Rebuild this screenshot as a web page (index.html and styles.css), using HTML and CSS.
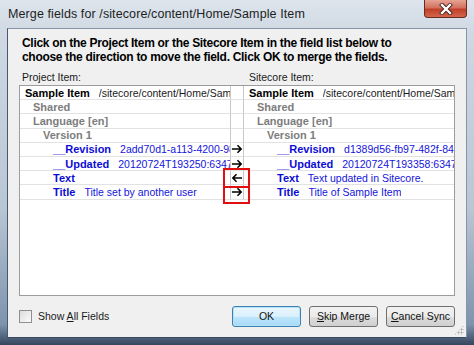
FILE: index.html
```html
<!DOCTYPE html>
<html lang="en">
<head>
  <meta charset="UTF-8">
  <title>Merge fields</title>
  <link rel="stylesheet" href="styles.css">
</head>
<body>
<div class="window">
  <div class="titlebar">
    <span class="title">Merge fields for /sitecore/content/Home/Sample Item</span>
    <div class="close">
      <svg width="16" height="12" viewBox="0 0 16 12">
        <path d="M4 2 L12 10 M12 2 L4 10" stroke="#3a1a16" stroke-width="4" stroke-linecap="square"/>
        <path d="M4 2 L12 10 M12 2 L4 10" stroke="#fff" stroke-width="2.4" stroke-linecap="square"/>
      </svg>
    </div>
  </div>

  <div class="client">
    <p class="intro">Click on the Project Item or the Sitecore Item in the field list below to<br>choose the direction to move the field. Click OK to merge the fields.</p>

    <div class="labels">
      <span class="lbl">Project Item:</span>
      <span class="lbl">Sitecore Item:</span>
    </div>

    <div class="panel">
      <div class="grid">
        <!-- row: item -->
        <div class="cell"><b class="item">Sample Item</b><span class="path">/sitecore/content/Home/Sample Item</span></div>
        <div class="cell mid"></div>
        <div class="cell"><b class="item">Sample Item</b><span class="path">/sitecore/content/Home/Sample Item</span></div>

        <div class="cell"><b class="grey lv1">Shared</b></div>
        <div class="cell mid"></div>
        <div class="cell"><b class="grey lv1">Shared</b></div>

        <div class="cell"><b class="grey lv1">Language [en]</b></div>
        <div class="cell mid"></div>
        <div class="cell"><b class="grey lv1">Language [en]</b></div>

        <div class="cell"><b class="grey lv2">Version 1</b></div>
        <div class="cell mid"></div>
        <div class="cell"><b class="grey lv2">Version 1</b></div>

        <div class="cell"><b class="field lv3">__Revision</b><span class="val">2add70d1-a113-4200-9861-2c2e1b0f77d3</span></div>
        <div class="cell mid"><svg class="arr" width="13" height="10" viewBox="0 0 13 10"><path d="M1 5 H11 M7 1 L11 5 L7 9" fill="none" stroke="#000" stroke-width="1.7"/></svg></div>
        <div class="cell"><b class="field lv3">__Revision</b><span class="val">d1389d56-fb97-482f-8451-7c2a90e3b1aa</span></div>

        <div class="cell"><b class="field lv3">__Updated</b><span class="val">20120724T193250:634786</span></div>
        <div class="cell mid"><svg class="arr" width="13" height="10" viewBox="0 0 13 10"><path d="M1 5 H11 M7 1 L11 5 L7 9" fill="none" stroke="#000" stroke-width="1.7"/></svg></div>
        <div class="cell"><b class="field lv3">__Updated</b><span class="val">20120724T193358:634786</span></div>

        <div class="cell"><b class="field lv3">Text</b></div>
        <div class="cell mid"><svg class="arr" width="13" height="10" viewBox="0 0 13 10"><path d="M12 5 H2 M6 1 L2 5 L6 9" fill="none" stroke="#000" stroke-width="1.7"/></svg></div>
        <div class="cell"><b class="field lv3">Text</b><span class="val">Text updated in Sitecore.</span></div>

        <div class="cell"><b class="field lv3">Title</b><span class="val">Title set by another user</span></div>
        <div class="cell mid"><svg class="arr" width="13" height="10" viewBox="0 0 13 10"><path d="M1 5 H11 M7 1 L11 5 L7 9" fill="none" stroke="#000" stroke-width="1.7"/></svg></div>
        <div class="cell"><b class="field lv3">Title</b><span class="val">Title of Sample Item</span></div>
      </div>

      <div class="mark mark-text"></div>
      <div class="mark mark-title"></div>
    </div>

    <div class="footer">
      <label class="check"><span class="box"></span><span>Show <u>A</u>ll Fields</span></label>
      <div class="buttons">
        <button class="btn default">OK</button>
        <button class="btn"><u>S</u>kip Merge</button>
        <button class="btn"><u>C</u>ancel Sync</button>
      </div>
    </div>
    <div class="grip"></div>
  </div>
</div>
</body>
</html>
```

FILE: styles.css
```css
body { margin: 0; background: #2d3c52; font-family: "Liberation Sans", Arial, sans-serif; }

.window {
  width: 474px;
  height: 345px;
  box-sizing: border-box;
  padding: 0 7px 7px;
  display: flex;
  flex-direction: column;
  background: linear-gradient(to bottom, #dde4ec 0%, #cfd8e3 10%, #b9c6d4 60%, #7e93ad 94%, #34465e 100%);
}

.titlebar {
  height: 28px;
  display: flex;
  align-items: flex-start;
  position: relative;
}
.title {
  font-size: 12.5px;
  letter-spacing: 0.1px;
  color: #1e1e1e;
  margin: 7px 0 0 1px;
}
.close {
  position: absolute;
  right: 0;
  top: 0;
  width: 43px;
  height: 18px;
  border: 1px solid #6b2a22;
  border-top: 0;
  border-radius: 0 0 4px 4px;
  box-sizing: border-box;
  background: linear-gradient(to bottom, #e6a394 0%, #d2725f 45%, #c0402a 55%, #d3664b 100%);
  display: flex;
  align-items: center;
  justify-content: center;
}

.client {
  flex: 1;
  background: #f0f0f0;
  border: 1px solid #8795a8;
  border-left-color: #47596f;
  border-bottom-color: #3a4a60;
  position: relative;
  display: flex;
  flex-direction: column;
  padding: 0 11px;
}

.intro {
  margin: 7px 0 0 3px;
  font-weight: bold;
  font-size: 12px;
  letter-spacing: -0.3px;
  line-height: 14px;
  color: #000;
}

.labels {
  display: grid;
  grid-template-columns: 227px 1fr;
  margin: 7px 0 0 3px;
  font-size: 10.5px;
  line-height: 13px;
  color: #1a1a1a;
}

.panel {
  margin-top: 1px;
  height: 211px;
  box-sizing: border-box;
  border: 1px solid #9c9c9c;
  background: #fff;
  position: relative;
}

.grid {
  display: grid;
  grid-template-columns: 210px 14px 1fr;
  grid-auto-rows: 14.2px;
}
.cell {
  border-bottom: 1px solid #e2e2e2;
  overflow: hidden;
  white-space: nowrap;
  font-size: 11px;
  line-height: 13px;
  display: flex;
  align-items: center;
  padding: 1px 0 0 5px;
}
.cell.mid {
  padding: 0;
  border-left: 1px solid #c8c8c8;
  border-right: 1px solid #c8c8c8;
  justify-content: center;
}
.item { color: #000; margin-right: 9px; flex: none; }
.path { color: #1a1a1a; font-size: 10.5px; overflow: hidden; }
.grey { color: #7d7d7d; }
.lv1 { margin-left: 8px; }
.lv2 { margin-left: 18px; }
.lv3 { margin-left: 28px; flex: none; margin-right: 9px; }
.field { color: #0c0cd6; }
.val { color: #1515dc; font-size: 10.5px; overflow: hidden; }
.arr { display: block; }

.mark {
  position: absolute;
  left: 203px;
  width: 27px;
  border: 2px solid #e01010;
  box-sizing: border-box;
}
.mark-text { top: 82px; height: 20px; }
.mark-title { top: 100px; height: 18px; }

.footer {
  display: flex;
  align-items: center;
  margin-top: 10px;
  height: 20px;
}
.check {
  display: flex;
  align-items: center;
  font-size: 10.5px;
  color: #1a1a1a;
}
.box {
  width: 11px;
  height: 11px;
  border: 1px solid #8e8f8f;
  background: linear-gradient(135deg, #dcdcdc, #fbfbfb);
  margin-right: 6px;
}
.buttons {
  margin-left: auto;
  display: flex;
  gap: 8px;
}
.btn {
  width: 69px;
  height: 21px;
  padding: 0;
  white-space: nowrap;
  border: 1px solid #707070;
  border-radius: 3px;
  background: linear-gradient(to bottom, #f2f2f2 0%, #ebebeb 50%, #dddddd 51%, #cfcfcf 100%);
  font-family: "Liberation Sans", Arial, sans-serif;
  font-size: 10.5px;
  color: #111;
}
.btn.default {
  border-color: #3c7fb1;
  box-shadow: inset 0 0 0 1px #b6e3f8;
  background: linear-gradient(to bottom, #eaf6fd 0%, #d9f0fc 50%, #bee6fd 51%, #a7d9f5 100%);
}

.grip {
  position: absolute;
  right: 2px;
  bottom: 2px;
  width: 10px;
  height: 10px;
  background: radial-gradient(circle, #a5a5a5 0.8px, transparent 1.2px) 0 0 / 3px 3px;
  clip-path: polygon(100% 0, 100% 100%, 0 100%);
}
```
